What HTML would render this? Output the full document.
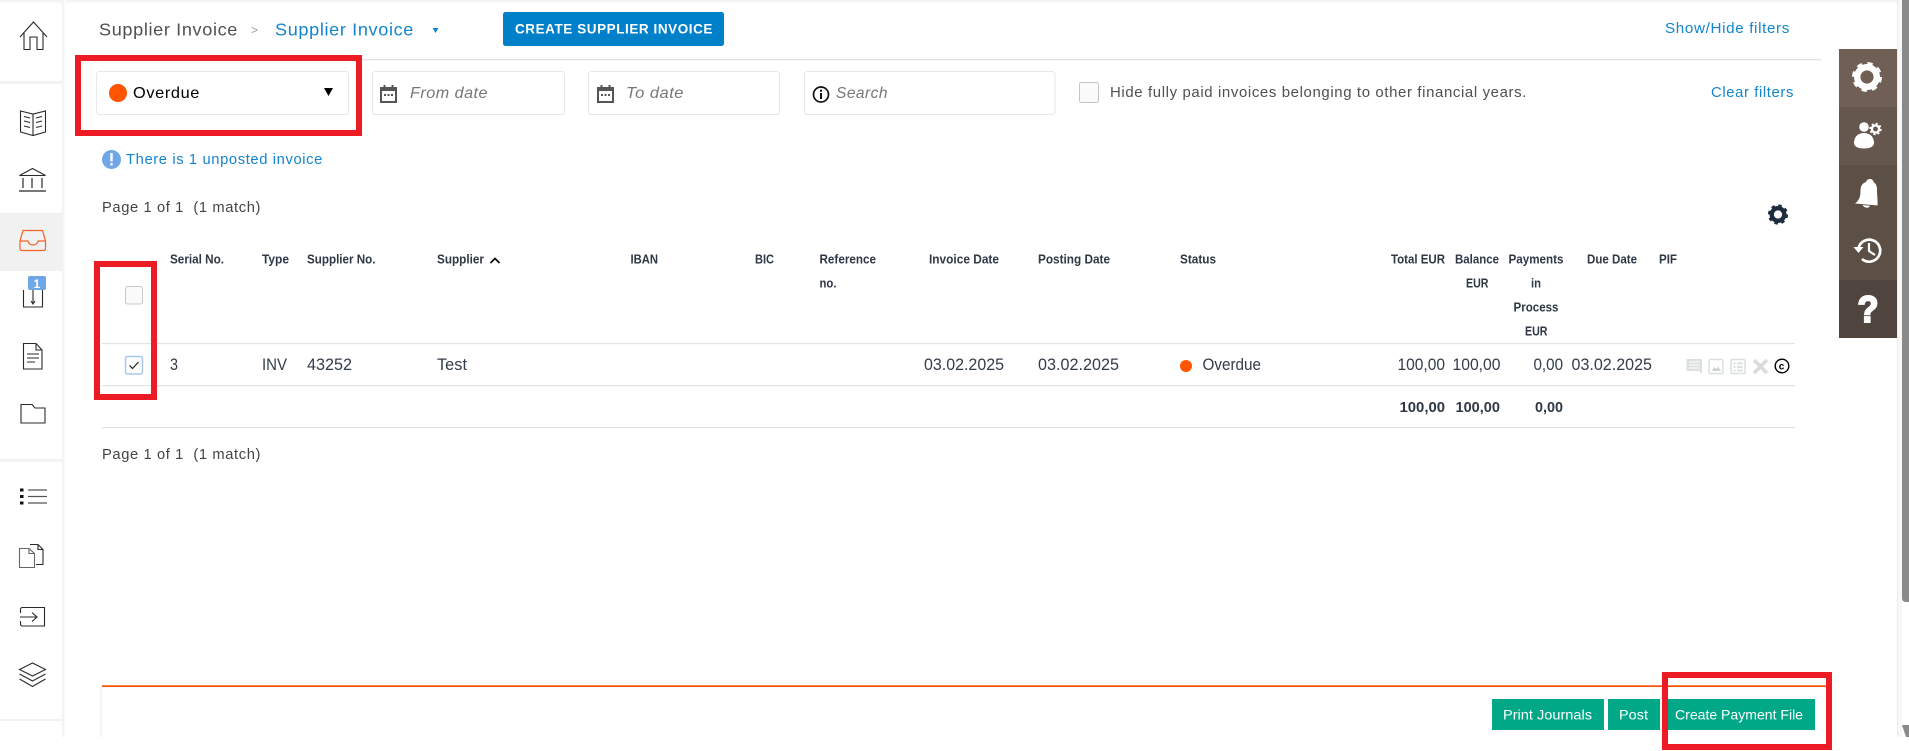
<!DOCTYPE html>
<html lang="en"><head><meta charset="utf-8"><title>Supplier Invoice</title>
<style>
html,body{margin:0;padding:0;width:1909px;height:751px;overflow:hidden;background:#fff}
svg{display:block}
text{font-family:"Liberation Sans",sans-serif;white-space:pre}
.ls{letter-spacing:.6px}
.h{font-size:12.5px;font-weight:700;fill:#2f3845}
.r{font-size:16.5px;fill:#333c48}
.t{font-size:14.5px;font-weight:700;fill:#2f3845}
.b{fill:#1285cd}
.g{fill:#505050}
.ph{font-size:16px;font-style:italic;fill:#777;letter-spacing:.5px}
.ic{fill:none;stroke:#2a2a2a;stroke-width:1.1}
.btn{font-size:14px;fill:#fff}
</style></head><body>
<svg width="1909" height="751" viewBox="0 0 1909 751" xmlns="http://www.w3.org/2000/svg">
<defs>
<linearGradient id="top" x1="0" y1="0" x2="0" y2="1"><stop offset="0" stop-color="#f0f0f0"/><stop offset="1" stop-color="#fff"/></linearGradient>
<linearGradient id="side" x1="0" y1="0" x2="1" y2="0"><stop offset="0" stop-color="#f0f0f0"/><stop offset="1" stop-color="#fff"/></linearGradient>
<linearGradient id="sideL" x1="1" y1="0" x2="0" y2="0"><stop offset="0" stop-color="#f0f0f0"/><stop offset="1" stop-color="#fff"/></linearGradient>
</defs>
<rect width="1909" height="751" fill="#fff"/>
<rect x="0" y="0" width="1897" height="4" fill="url(#top)"/>

<!-- sidebar -->
<rect x="62" y="0" width="4" height="737" fill="url(#side)"/>
<rect x="0" y="81" width="62" height="3" fill="#f2f2f2"/>
<rect x="0" y="213" width="62" height="58" fill="#f1f1f1"/>
<rect x="0" y="459" width="62" height="2.5" fill="#f2f2f2"/>
<rect x="0" y="719" width="62" height="2" fill="#f2f2f2"/>

<path class="ic" d="M20 37 L33.5 22 L47 37 M24 33 V49.5 H30 V37 H37 V49.5 H43 V33"/>
<path class="ic" d="M20.5 111 L33 114 L45.5 111 V132 L33 135.5 L20.5 132 Z M33 114 V135.5 M24 116.5 L30 118 M24 121 L30 122.5 M24 126 L30 127.5 M36 118 L42 116.5 M36 122.5 L42 121 M36 127.5 L42 126"/>
<path class="ic" d="M19.5 175.5 L32.5 168.5 L45.5 175.5 Z" stroke-width="1.4"/>
<path d="M23 178 V188 M32 178 V188 M42 178 V188" fill="none" stroke="#555" stroke-width="1.5"/>
<rect x="19" y="190" width="27" height="2" fill="#777"/>
<path d="M23 230.5 H42.5 L45.5 241 V248 q0 2.5 -2 2.500 H22 q-2 0 -2 -2.500 V241 Z M20 241 H28 q1 4 5 4 q4 0 5 -4 H45.500" fill="none" stroke="#f2632a" stroke-width="1.200"/>
<path class="ic" d="M23.500 290 V307 H42.500 V290 M33 289 V303 M31 301 L33 304 L35 301"/>
<rect x="28" y="276" width="18" height="14" rx="2" fill="#6ea6e8"/>
<text x="33.500" y="288" font-size="12" font-weight="700" fill="#fff">1</text>
<path class="ic" d="M23.500 343.500 H36 L42 350 V369 H23.500 Z M36 343.500 V350 H42 M27 354 H39 M27 358 H39 M27 362 H35"/>
<path class="ic" d="M21 423 V404.500 H32 L35 408 H45 V423 Z"/>
<path d="M28 490 H47 M28 496.500 H47 M28 503 H47" stroke="#555" stroke-width="1.200" fill="none"/>
<path d="M20 488.500h3.500v3h-3.500z M20 495h3.500v3h-3.500z M20 501.500h3.500v3h-3.500z" fill="#111"/>
<path class="ic" d="M30 544.500 H38 L43 549.500 V564.500 H36 M38 544.500 V549.500 H43"/>
<path d="M19.500 548.500 H29 L34.500 553.500 V567.500 H19.500 Z M29 548.500 V553.500 H34.500" fill="none" stroke="#666" stroke-width="1.100"/>
<path class="ic" d="M20.500 613 V609.500 q0 -2 2 -2 H44.500 V626 H22.500 q-2 0 -2 -2 V621 M20 617 H37 M32 612.500 L37 617 L32 621.500"/>
<path class="ic" d="M32.500 663 L45.500 669.500 L32.500 676 L19.500 669.500 Z M19.500 674 L32.500 681 L45.500 674 M19.500 679 L32.500 686.500 L45.500 679"/>

<!-- breadcrumb -->
<text x="99" y="35.500" font-size="17.500" textLength="139" lengthAdjust="spacingAndGlyphs" class="g ls">Supplier Invoice</text>
<text x="251" y="34" font-size="12" fill="#999" textLength="7" lengthAdjust="spacingAndGlyphs">&gt;</text>
<text x="275" y="35.500" font-size="17.500" textLength="139" lengthAdjust="spacingAndGlyphs" class="b ls">Supplier Invoice</text>
<path d="M432.500 28 H438.500 L435.500 33 Z" fill="#1285cd"/>
<rect x="503" y="12" width="221" height="34" rx="2.500" fill="#0080c9"/>
<text x="515" y="33.500" font-size="14" fill="#fff" font-weight="700" textLength="198" lengthAdjust="spacingAndGlyphs" class="ls">CREATE SUPPLIER INVOICE</text>
<text x="1665" y="33" font-size="14.500" textLength="125" lengthAdjust="spacingAndGlyphs" class="b ls">Show/Hide filters</text>
<rect x="100" y="59" width="1721" height="1.300" fill="#e2e2e2"/>

<!-- filters -->
<rect x="96.500" y="71.500" width="252" height="43" rx="3" fill="#fff" stroke="#e8e8e8"/>
<circle cx="118" cy="93" r="9" fill="#ff5500"/>
<text x="133" y="98" font-size="16" fill="#000" textLength="67" lengthAdjust="spacingAndGlyphs" class="ls">Overdue</text>
<path d="M324 88 H333 L328.500 96 Z" fill="#000"/>

<rect x="372.500" y="71.500" width="192" height="43" rx="3" fill="#fff" stroke="#e8e8e8"/>
<g id="cal"><path d="M380 87 h17 v16 h-17z" fill="#555"/><rect x="382" y="91" width="13" height="10" fill="#fff"/><rect x="383.500" y="85" width="2" height="3" fill="#555"/><rect x="391.500" y="85" width="2" height="3" fill="#555"/><path d="M384 94h2v2h-2z M387.500 94h2v2h-2z M391 94h2v2h-2z" fill="#555"/></g>
<text x="410" y="98" class="ph" textLength="78" lengthAdjust="spacingAndGlyphs">From date</text>

<rect x="588.500" y="71.500" width="191" height="43" rx="3" fill="#fff" stroke="#e8e8e8"/>
<use href="#cal" x="217"/>
<text x="626" y="98" class="ph" textLength="58" lengthAdjust="spacingAndGlyphs">To date</text>

<rect x="804.500" y="71.500" width="250.500" height="43" rx="3" fill="#fff" stroke="#e8e8e8"/>
<circle cx="821" cy="94.500" r="7.500" fill="none" stroke="#111" stroke-width="1.700"/>
<rect x="820" y="93" width="2" height="6" fill="#111"/><rect x="820" y="89.700" width="2" height="2" fill="#111"/>
<text x="836" y="98" class="ph" textLength="52" lengthAdjust="spacingAndGlyphs">Search</text>

<rect x="1079.500" y="82.500" width="19" height="20" rx="2" fill="#fafafa" stroke="#c4c4c4"/>
<text x="1110" y="97" font-size="14.500" textLength="417" lengthAdjust="spacingAndGlyphs" class="g ls">Hide fully paid invoices belonging to other financial years.</text>
<text x="1711" y="97" font-size="14.500" textLength="83" lengthAdjust="spacingAndGlyphs" class="b ls">Clear filters</text>

<!-- notice -->
<circle cx="111.500" cy="159.500" r="9.500" fill="#6ea6e8"/>
<rect x="110.300" y="153" width="2.400" height="8.500" fill="#fff"/><rect x="110.300" y="163" width="2.400" height="2.500" fill="#fff"/>
<text x="126" y="164" font-size="14.500" textLength="197" lengthAdjust="spacingAndGlyphs" class="b ls">There is 1 unposted invoice</text>
<text x="102" y="212" font-size="14.500" textLength="159" lengthAdjust="spacingAndGlyphs" fill="#444" class="ls">Page 1 of 1  (1 match)</text>
<text x="102" y="459" font-size="14.500" textLength="159" lengthAdjust="spacingAndGlyphs" fill="#444" class="ls">Page 1 of 1  (1 match)</text>

<!-- small gear -->
<circle cx="1778" cy="214.500" r="6.300" fill="none" stroke="#1f2d3d" stroke-width="4.400"/>
<circle cx="1778" cy="214.500" r="8.800" fill="none" stroke="#1f2d3d" stroke-width="2.600" stroke-dasharray="3.455 3.455"/>

<!-- table header -->
<text class="h" x="170" y="263.500" textLength="54" lengthAdjust="spacingAndGlyphs">Serial No.</text>
<text class="h" x="262" y="263.500" textLength="27" lengthAdjust="spacingAndGlyphs">Type</text>
<text class="h" x="307" y="263.500" textLength="68.500" lengthAdjust="spacingAndGlyphs">Supplier No.</text>
<text class="h" x="437" y="263.500" textLength="47" lengthAdjust="spacingAndGlyphs">Supplier</text>
<path d="M490.500 263 L495 258.500 L499.500 263" fill="none" stroke="#111" stroke-width="1.800"/>
<text class="h" x="630.500" y="263.500" textLength="27.500" lengthAdjust="spacingAndGlyphs">IBAN</text>
<text class="h" x="755" y="263.500" textLength="19" lengthAdjust="spacingAndGlyphs">BIC</text>
<text class="h" x="819.500" y="263.500" textLength="56.500" lengthAdjust="spacingAndGlyphs">Reference</text>
<text class="h" x="819.500" y="287.500" textLength="17" lengthAdjust="spacingAndGlyphs">no.</text>
<text class="h" x="929" y="263.500" textLength="70" lengthAdjust="spacingAndGlyphs">Invoice Date</text>
<text class="h" x="1038" y="263.500" textLength="72" lengthAdjust="spacingAndGlyphs">Posting Date</text>
<text class="h" x="1180" y="263.500" textLength="36" lengthAdjust="spacingAndGlyphs">Status</text>
<text class="h" x="1391" y="263.500" textLength="54" lengthAdjust="spacingAndGlyphs">Total EUR</text>
<text class="h" x="1455" y="263.500" textLength="44" lengthAdjust="spacingAndGlyphs">Balance</text>
<text class="h" x="1466" y="287.500" textLength="22.500" lengthAdjust="spacingAndGlyphs">EUR</text>
<text class="h" x="1508.500" y="263.500" textLength="55" lengthAdjust="spacingAndGlyphs">Payments</text>
<text class="h" x="1531" y="287.500" textLength="10" lengthAdjust="spacingAndGlyphs">in</text>
<text class="h" x="1513.500" y="311.500" textLength="45" lengthAdjust="spacingAndGlyphs">Process</text>
<text class="h" x="1525" y="335.500" textLength="22.500" lengthAdjust="spacingAndGlyphs">EUR</text>
<text class="h" x="1587" y="263.500" textLength="50" lengthAdjust="spacingAndGlyphs">Due Date</text>
<text class="h" x="1659" y="263.500" textLength="18" lengthAdjust="spacingAndGlyphs">PIF</text>

<rect x="125.500" y="286.500" width="17" height="17.500" rx="2" fill="#fafafa" stroke="#c8c8c8"/>
<rect x="102" y="343" width="1693" height="1.200" fill="#e3e3e3"/>
<rect x="102" y="385" width="1693" height="1.200" fill="#e3e3e3"/>
<rect x="102" y="427" width="1693" height="1.200" fill="#e3e3e3"/>

<!-- row -->
<rect x="125.500" y="356.500" width="17" height="17.500" rx="2" fill="#fff" stroke="#a9c8ef" stroke-width="1.500"/>
<path d="M129.500 365.500 L132.500 368.500 L138.500 362" fill="none" stroke="#222" stroke-width="1.200"/>
<text class="r" x="170" y="370" textLength="8" lengthAdjust="spacingAndGlyphs">3</text>
<text class="r" x="262" y="370" textLength="25" lengthAdjust="spacingAndGlyphs">INV</text>
<text class="r" x="307" y="370" textLength="45" lengthAdjust="spacingAndGlyphs">43252</text>
<text class="r" x="437" y="370" textLength="30" lengthAdjust="spacingAndGlyphs">Test</text>
<text class="r" x="924" y="370" textLength="80" lengthAdjust="spacingAndGlyphs">03.02.2025</text>
<text class="r" x="1038" y="370" textLength="81" lengthAdjust="spacingAndGlyphs">03.02.2025</text>
<circle cx="1186" cy="366" r="6" fill="#ff5500"/>
<text class="r" x="1202.500" y="370" textLength="58.500" lengthAdjust="spacingAndGlyphs">Overdue</text>
<text class="r" x="1397.500" y="370" textLength="47.500" lengthAdjust="spacingAndGlyphs">100,00</text>
<text class="r" x="1452.500" y="370" textLength="48" lengthAdjust="spacingAndGlyphs">100,00</text>
<text class="r" x="1533.500" y="370" textLength="29.500" lengthAdjust="spacingAndGlyphs">0,00</text>
<text class="r" x="1571.500" y="370" textLength="80.500" lengthAdjust="spacingAndGlyphs">03.02.2025</text>

<!-- action icons -->
<path d="M1686.500 359 H1702 V373.500 L1699 371 H1686.500 Z" fill="#dcdfdf"/>
<path d="M1689 362 H1699.500 M1689 365 H1699.500 M1689 368 H1699.500" stroke="#fff" stroke-width="1.100"/>
<rect x="1709" y="359.500" width="14" height="14" rx="1.500" fill="none" stroke="#dcdfdf" stroke-width="1.500"/>
<path d="M1711.500 371 L1714.500 367 L1716.500 369 L1718 366.500 L1721 371 Z" fill="#cfd3d3"/>
<rect x="1731" y="359.500" width="14" height="14" rx="1" fill="none" stroke="#dcdfdf" stroke-width="1.500"/>
<path d="M1733.500 362.500 h2 v2 h-2z M1733.500 366 h2 v2 h-2z M1733.500 369.500 h2 v2 h-2z M1737 362.500 h5.500 v2 h-5.500z M1737 366 h5.500 v2 h-5.500z M1737 369.500 h5.500 v2 h-5.500z" fill="#dcdfdf"/>
<path d="M1754 360 L1767 373 M1767 360 L1754 373" stroke="#d9dcdc" stroke-width="3.600"/>
<circle cx="1782" cy="366" r="6.800" fill="none" stroke="#000" stroke-width="1.400"/>
<text x="1778.800" y="369.500" font-size="10" font-weight="700" fill="#000">c</text>

<!-- totals -->
<text class="t" x="1399.500" y="412" textLength="45.500" lengthAdjust="spacingAndGlyphs">100,00</text>
<text class="t" x="1455.500" y="412" textLength="44.500" lengthAdjust="spacingAndGlyphs">100,00</text>
<text class="t" x="1535" y="412" textLength="28" lengthAdjust="spacingAndGlyphs">0,00</text>

<!-- footer -->
<rect x="99" y="687" width="3" height="50" fill="url(#sideL)"/>
<rect x="102" y="685.300" width="1725" height="1.700" fill="#ff5000"/>
<rect x="1492" y="699" width="112" height="31" fill="#00a887"/>
<rect x="1608" y="699" width="52" height="31" fill="#00a887"/>
<rect x="1664" y="699" width="151" height="31" fill="#00a887"/>
<text class="btn" x="1503" y="719.500" textLength="89" lengthAdjust="spacingAndGlyphs">Print Journals</text>
<text class="btn" x="1619" y="719.500" textLength="29" lengthAdjust="spacingAndGlyphs">Post</text>
<text class="btn" x="1675" y="719.500" textLength="128" lengthAdjust="spacingAndGlyphs">Create Payment File</text>

<!-- right panel -->
<rect x="1897" y="0" width="5" height="737" fill="#f8f8f8"/>
<rect x="1897" y="0" width="1" height="737" fill="#ececec"/>
<path d="M1902 0 H1909 V602 H1906 Q1902 602 1902 598 Z" fill="#8a8a8a"/>
<path d="M1902 725 H1909 V737 H1906 Z" fill="#8a8a8a"/>
<rect x="1839" y="49" width="58" height="58" fill="#705f55"/>
<rect x="1839" y="107" width="58" height="58" fill="#65574d"/>
<rect x="1839" y="165" width="58" height="115" fill="#5b4f46"/>
<rect x="1839" y="280" width="58" height="58" fill="#50443e"/>

<circle cx="1867" cy="77" r="9.800" fill="none" stroke="#fff" stroke-width="6.400"/>
<circle cx="1867" cy="77" r="13.300" fill="none" stroke="#fff" stroke-width="3.400" stroke-dasharray="5.220 5.225"/>

<circle cx="1864" cy="127" r="4.800" fill="#fff"/>
<path d="M1854 143 C1854 136 1859 133 1864 133 C1869 133 1874 136 1874 143 C1874 147 1869 148.500 1864 148.500 C1859 148.500 1854 147 1854 143 Z" fill="#fff"/>
<circle cx="1875.500" cy="129" r="3.600" fill="none" stroke="#fff" stroke-width="2.400"/>
<circle cx="1875.500" cy="129" r="5.300" fill="none" stroke="#fff" stroke-width="1.800" stroke-dasharray="2.080 2.080"/>

<path d="M1870 179 C1867.500 179 1866.500 180.500 1866 182 C1861.500 183.500 1860.500 187 1860.500 191 C1860.500 197 1859 200.500 1855 203.500 L1877.500 205.500 C1878 201 1877 196 1877 190 C1877 186 1876 183.500 1873.500 182 C1873 180 1872 179 1870 179 Z" fill="#fff"/>
<path d="M1862.500 205 L1870 205.700 C1869 208.500 1864.500 208.500 1862.500 205 Z" fill="#fff"/>

<path d="M1858.500 248 A11 11 0 1 1 1862 259" fill="none" stroke="#fff" stroke-width="2.700"/>
<path d="M1853.500 247 L1863.500 247 L1858.500 253 Z" fill="#fff"/>
<path d="M1869 243 V251 L1875 255" fill="none" stroke="#fff" stroke-width="2.200"/>

<text x="1857.500" y="322" font-size="37" font-weight="700" fill="#fff" stroke="#fff" stroke-width="2" textLength="21" lengthAdjust="spacingAndGlyphs">?</text>

<!-- red annotation boxes -->
<rect x="78" y="58" width="281" height="75" fill="none" stroke="#ed1c24" stroke-width="6"/>
<rect x="97" y="264" width="57" height="133" fill="none" stroke="#ed1c24" stroke-width="6"/>
<rect x="1665" y="675" width="164" height="72" fill="none" stroke="#ed1c24" stroke-width="6"/>
</svg>
</body></html>
